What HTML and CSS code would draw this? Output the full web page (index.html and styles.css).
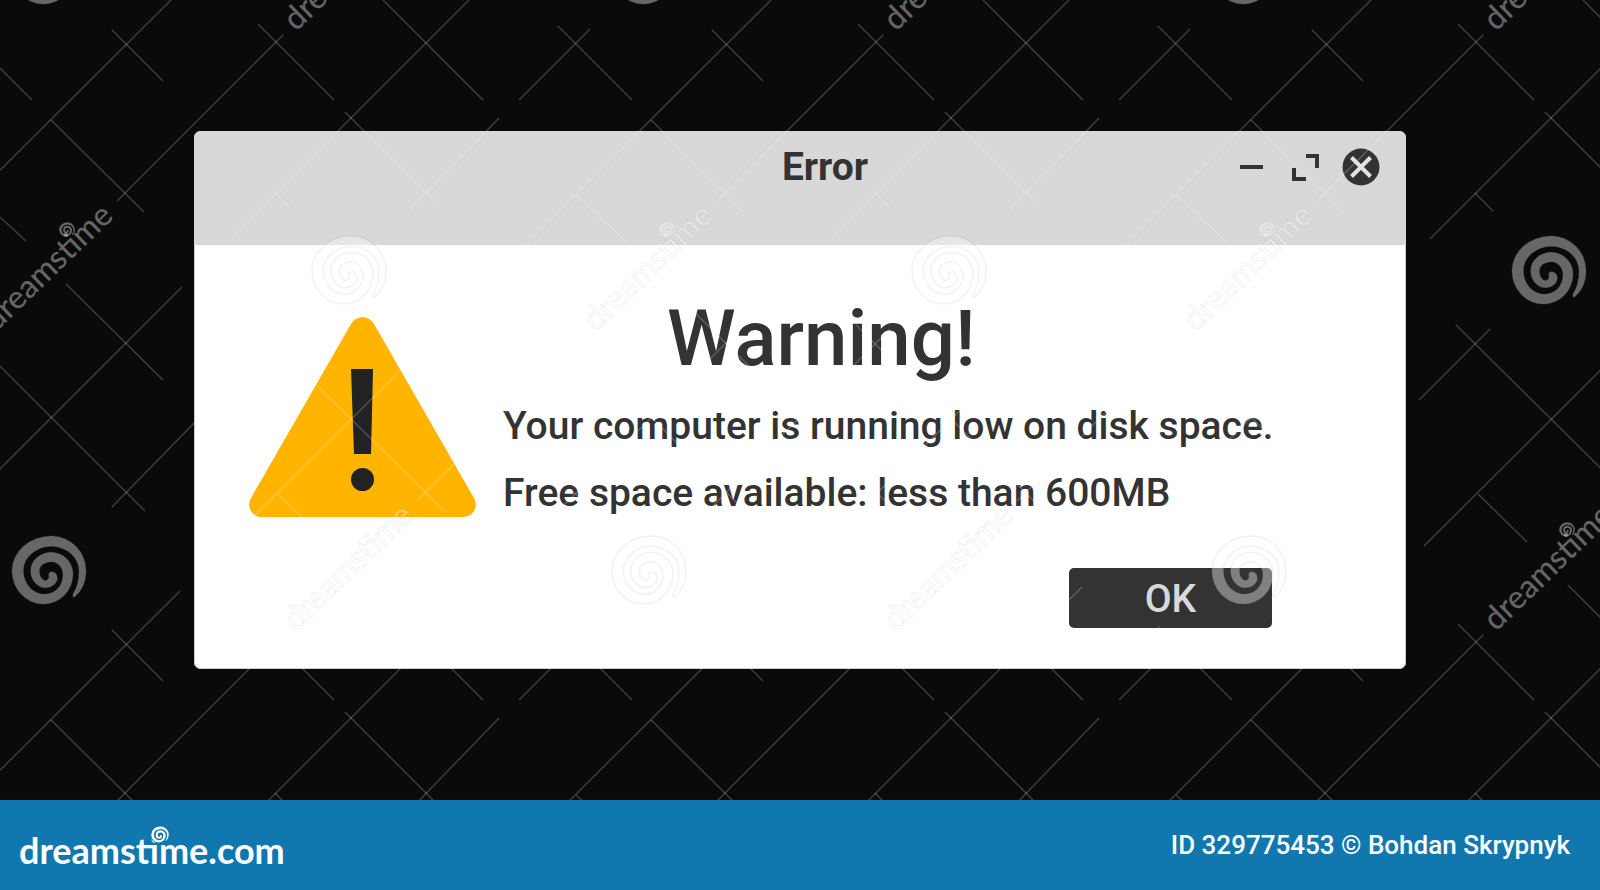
FILE: index.html
```
<!DOCTYPE html>
<html lang="en">
<head>
<meta charset="utf-8">
<title>Error</title>
<link rel="stylesheet" href="styles.css">
</head>
<body>
<main class="stage">
  <section class="window" role="alertdialog" aria-labelledby="title" aria-describedby="message">
    <header class="titlebar">
      <h1 class="title" id="title">Error</h1>
      <div class="controls">
        <button class="control" type="button" aria-label="Minimize">
          <svg width="24" height="38" viewBox="0 0 24 38"><path d="M0 19H23" stroke="#333" stroke-width="4"/></svg>
        </button>
        <button class="control" type="button" aria-label="Maximize">
          <svg width="28" height="38" viewBox="0 0 28 38"><path d="M14 8H25V20M2 20V31H14" fill="none" stroke="#333" stroke-width="4"/></svg>
        </button>
        <button class="control" type="button" aria-label="Close">
          <svg width="38" height="38" viewBox="0 0 38 38"><circle cx="19" cy="19" r="18.500" fill="#333"/><path d="M9.500 9.500L28.500 28.500M28.500 9.500L9.500 28.500" stroke="#e2e2e2" stroke-width="4"/></svg>
        </button>
      </div>
    </header>
    <div class="content">
      <svg class="warning-icon" width="227" height="200" viewBox="0 0 227 200" aria-hidden="true">
        <path d="M102 7C107 -2 120 -2 125 7L225 181C230 190 224 200 214 200H13C3 200 -3 190 2 181Z" fill="#ffb400"/>
        <path d="M102 52H124L122 137H105Z" fill="#222"/>
        <circle cx="113.500" cy="162.500" r="11.500" fill="#222"/>
      </svg>
      <div class="details">
        <h2 class="heading">Warning!</h2>
        <div class="message" id="message">
          <p class="line">Your computer is running low on disk space.</p>
          <p class="line">Free space available: less than 600MB</p>
        </div>
        <button class="ok" type="button">OK</button>
      </div>
    </div>
  </section>

  <svg class="pattern" aria-hidden="true">
    <defs>
      <symbol id="spiral" viewBox="36 105 228 210">
        <path d="M226 292Q261 262 261 213A104 105 0 0 0 157 108A118 104 0 0 0 39 212A94 100 0 0 0 133 312A89 90 0 0 0 222 222A65 65 0 0 0 157 157A62 55 0 0 0 95 212A45 51 0 0 0 140 263A35 30 0 0 0 175 233A17 18 0 0 0 158 215Q149 216 149 226Q153 238 140 242A19 30 0 0 1 121 212A36 27 0 0 1 157 185A35 40 0 0 1 192 225A55 58 0 0 1 137 283A64 71 0 0 1 73 212A84 73 0 0 1 157 139A83 74 0 0 1 240 213Q240 255 222 282Q220 292 226 292Z"/>
      </symbol>
      <g id="mark">
        <use href="#spiral" class="mark-shape mark-large" x="11" y="-65" width="76" height="70"/>
        <use href="#spiral" class="mark-shape" x="59" y="222" width="16" height="15"/>
        <text class="mark-text" transform="translate(-4 332) rotate(-44)">dreamstime</text>
      </g>
      <g id="tile">
        <path class="mark-line" d="M180 -9L-76 246M283 35L117 201M482 -13L230 239M499 118L410 210M590 29L519 100M480 291L224 546M583 335L417 501M182 287L-70 539M199 418L112 507M290 329L219 400"/>
        <path class="mark-line" d="M112 30L163 81M558 26L632 100M51 120L144 212M258 24L334 100M368 -15L483 100M345 112L439 206M275 193L293 211M576 195L626 241M-42 324L145 511M256 325L444 511M278 494L327 542M66 284L163 380M-25 493L-7 511M412 330L463 381"/>
        <use href="#mark"/>
        <use href="#mark" x="300" y="300"/>
      </g>
    </defs>
    <use href="#tile" x="-600" y="0"/>
    <use href="#tile" x="0" y="0"/>
    <use href="#tile" x="600" y="0"/>
    <use href="#tile" x="1200" y="0"/>
    <use href="#tile" x="0" y="-600"/>
    <use href="#tile" x="600" y="-600"/>
    <use href="#tile" x="1200" y="-600"/>
    <use href="#tile" x="0" y="600"/>
    <use href="#tile" x="600" y="600"/>
    <use href="#tile" x="1200" y="600"/>
  </svg>
</main>
<footer class="footer">
  <a class="brand" href="#">dreamstime.com<svg class="brand-dot" width="18" height="17" fill="#fff" aria-hidden="true"><circle cx="9" cy="8" r="10" fill="#1077af"/><use href="#spiral" width="18" height="17"/></svg></a>
  <p class="credit">ID 329775453 © Bohdan Skrypnyk</p>
</footer>
</body>
</html>
```
FILE: styles.css
```
* {
  box-sizing: border-box;
  margin: 0;
}

body {
  min-height: 100vh;
  display: flex;
  flex-direction: column;
  background: #0a0a0a;
  color: #333;
  font-family: Roboto, "Liberation Sans", sans-serif;
}

.stage {
  flex: 1;
  position: relative;
  overflow: hidden;
  padding: 131px 24px;
}

.window {
  max-width: 1212px;
  margin: 0 auto;
  background: #fff;
  border-radius: 7px;
  box-shadow: inset 0 0 0 1px #ccc;
  overflow: hidden;
}

.titlebar {
  display: grid;
  grid-template-columns: 1fr auto 1fr;
  align-items: start;
  padding: 17px 26px 0 76px;
  min-height: 114px;
  background: #d8d8d8;
}

.title {
  grid-column: 2;
  font-size: 39px;
  line-height: 38px;
  font-weight: 700;
}

.controls {
  display: flex;
  justify-content: flex-end;
  gap: 22px;
}

.control {
  display: flex;
  padding: 0;
  border: 0;
  background: none;
}

.controls .control:first-child {
  margin-right: 6px;
}

.content {
  display: flex;
  gap: 27px;
  padding: 54px 134px 41px 55px;
}

.warning-icon {
  flex: none;
  margin-top: 18px;
}

.details {
  flex: 1;
  min-width: 0;
  display: flex;
  flex-direction: column;
}

.heading {
  padding-left: 164px;
  font-size: 78px;
  line-height: 80px;
  font-weight: 500;
}

.message {
  margin-top: 14px;
}

.line {
  font-size: 39px;
  line-height: 67px;
  font-weight: 500;
  white-space: nowrap;
}

.ok {
  align-self: flex-end;
  width: 203px;
  height: 60px;
  margin-top: 41px;
  border: 0;
  border-radius: 5px;
  background: #333;
  color: #d9d9d9;
  font: 500 39px/60px Roboto, "Liberation Sans", sans-serif;
}

.pattern {
  position: absolute;
  inset: 0;
  width: 100%;
  height: 100%;
  pointer-events: none;
}

.mark-line {
  fill: none;
  stroke: #fff;
  stroke-opacity: 0.22;
  stroke-width: 1.4;
}

.mark-shape,
.mark-text {
  fill: #fff;
  fill-opacity: 0.38;
  stroke: #888;
  stroke-opacity: 0.12;
}

.mark-large {
  stroke-width: 4;
}

.mark-text {
  font: 400 32px Lato, sans-serif;
}

.footer {
  display: flex;
  justify-content: space-between;
  align-items: center;
  height: 90px;
  padding: 0 30px 0 19px;
  background: #1077af;
  color: #fff;
}

.brand {
  position: relative;
  padding-top: 10px;
  color: #fff;
  font: 700 36px/44px Lato, sans-serif;
  text-decoration: none;
}

.brand-dot {
  position: absolute;
  left: 132px;
  top: 8px;
  overflow: visible;
}

.credit {
  font-size: 26px;
  line-height: 30px;
  font-weight: 500;
}
```
